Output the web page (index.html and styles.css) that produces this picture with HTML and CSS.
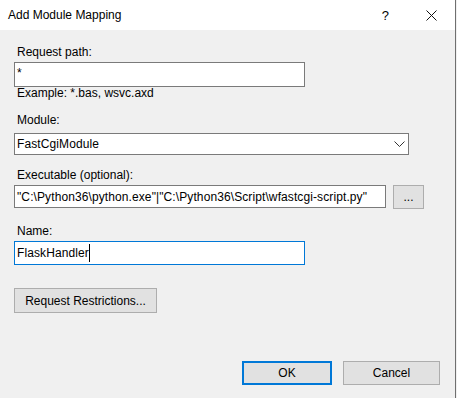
FILE: index.html
```html
<!DOCTYPE html>
<html lang="en">

<head>
    <meta charset="UTF-8">
    <title>Add Module Mapping</title>
    <link rel="stylesheet" href="styles.css">
</head>

<body>
    <div class="dialog">
        <div class="titlebar">
            <span class="title">Add Module Mapping</span>
            <span class="help">?</span>
            <svg class="close" width="11" height="11" viewBox="0 0 11 11">
                <path d="M0.5 0.5 L10.5 10.5 M10.5 0.5 L0.5 10.5" stroke="#111" stroke-width="1" fill="none"/>
            </svg>
        </div>

        <div class="content">
            <div class="label label-path">Request path:</div>
            <div class="field field-path">*</div>
            <div class="hint">Example: *.bas, wsvc.axd</div>

            <div class="label label-module">Module:</div>
            <div class="field field-select">
                <span>FastCgiModule</span>
                <svg class="chevron" width="11" height="6" viewBox="0 0 11 6">
                    <path d="M0.5 0.5 L5.5 5.5 L10.5 0.5" stroke="#333" stroke-width="1" fill="none"/>
                </svg>
            </div>

            <div class="label label-exe">Executable (optional):</div>
            <div class="row">
                <div class="field field-exe">"C:\Python36\python.exe"|"C:\Python36\Script\wfastcgi-script.py"</div>
                <div class="btn btn-browse">...</div>
            </div>

            <div class="label label-name">Name:</div>
            <div class="field field-name focused">FlaskHandler<span class="caret"></span></div>

            <div class="btn btn-restrict">Request Restrictions...</div>

            <div class="actions">
                <div class="btn btn-ok">OK</div>
                <div class="btn btn-cancel">Cancel</div>
            </div>
        </div>
    </div>
</body>

</html>
```

FILE: styles.css
```css
* {
    margin: 0;
    padding: 0;
    box-sizing: border-box;
}

body {
    background-color: #f0f0f0;
    color: #000;
    font-family: "Liberation Sans", Arial, sans-serif;
    font-size: 12px;
    width: 457px;
    height: 398px;
    overflow: hidden;
}

.dialog {
    width: 456px;
    height: 398px;
    border-right: 1px solid #6f6f6f;
    background-color: #f0f0f0;
}

.titlebar {
    height: 30px;
    background-color: #fff;
    display: flex;
    align-items: center;
    padding-left: 8px;
}

.title {
    flex-grow: 1;
    font-size: 12px;
}

.help {
    font-size: 13px;
    margin-right: 37px;
}

.close {
    margin-right: 18px;
}

.content {
    padding-left: 14px;
    display: flex;
    flex-direction: column;
    align-items: flex-start;
}

.label {
    line-height: 16px;
    padding-left: 3px;
    margin-bottom: 2px;
}

.label-path {
    margin-top: 14px;
}

.label-module {
    margin-top: 11px;
    margin-bottom: 5px;
}

.label-exe {
    margin-top: 12px;
}

.label-name {
    margin-top: 14px;
}

.field {
    background-color: #fff;
    border: 1px solid #7a7a7a;
    padding-left: 2px;
    display: flex;
    align-items: center;
    white-space: nowrap;
    letter-spacing: 0.1px;
}

.field-path {
    width: 291px;
    height: 25px;
    align-items: flex-start;
    padding-top: 3px;
}

.hint {
    line-height: 16px;
    padding-left: 3px;
    margin-top: -2px;
}

.field-select {
    width: 395px;
    height: 22px;
    justify-content: space-between;
    padding-right: 3px;
}

.row {
    display: flex;
    gap: 7px;
}

.field-exe {
    width: 372px;
    height: 23px;
}

.field-name {
    width: 291px;
    height: 24px;
}

.field.focused {
    border-color: #0078d7;
}

.caret {
    display: inline-block;
    width: 1px;
    height: 18px;
    background-color: #000;
}

.btn {
    background-color: #e1e1e1;
    border: 1px solid #adadad;
    display: flex;
    align-items: center;
    justify-content: center;
}

.btn-browse {
    width: 31px;
    height: 24px;
}

.btn-restrict {
    width: 143px;
    height: 25px;
    margin-top: 23px;
}

.actions {
    display: flex;
    gap: 11px;
    margin-top: 48px;
    margin-left: 228px;
}

.btn-ok {
    width: 90px;
    height: 24px;
    border: 2px solid #0078d7;
}

.btn-cancel {
    width: 97px;
    height: 24px;
}
```
